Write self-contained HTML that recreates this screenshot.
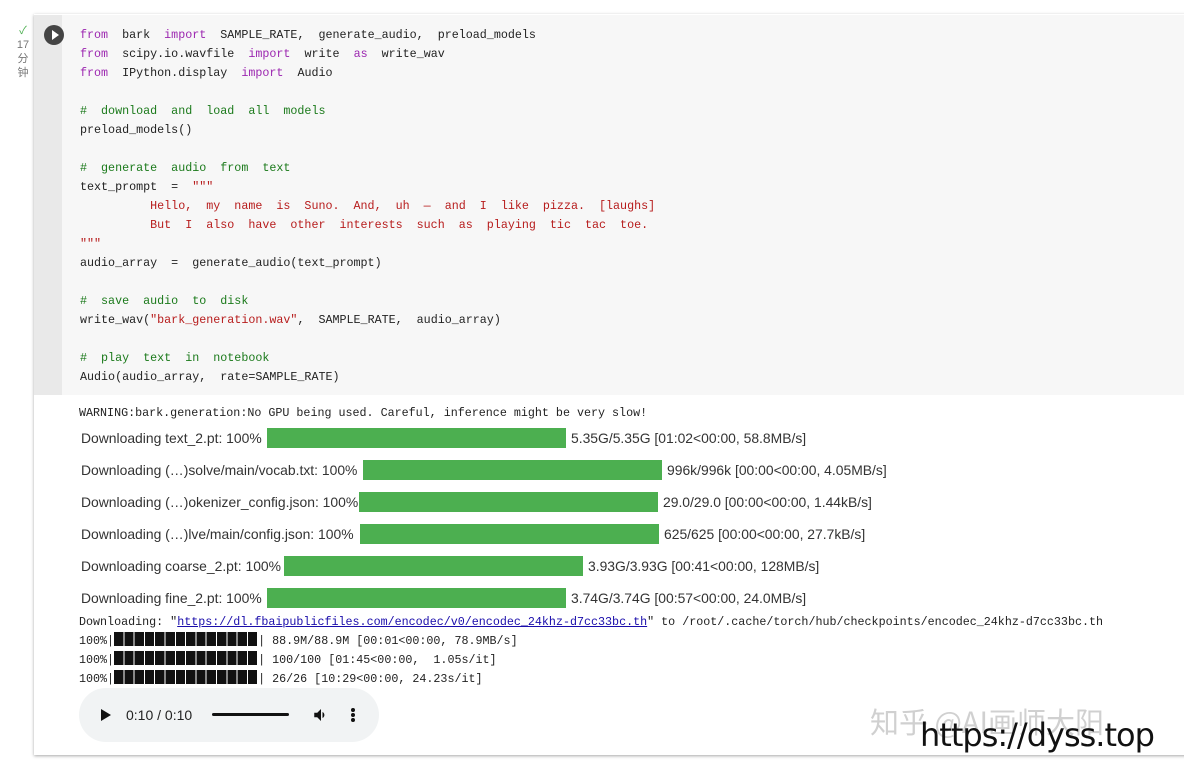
<!DOCTYPE html>
<html><head><meta charset="utf-8"><style>
body{margin:0;width:1184px;height:769px;background:#fff;position:relative;overflow:hidden;font-family:"Liberation Sans",sans-serif}
.card{position:absolute;left:34px;top:14px;width:1160px;height:741px;background:#fff;box-shadow:0 1px 3px rgba(0,0,0,.35)}
.gut{position:absolute;left:34px;top:15px;width:28px;height:380px;background:#e9e9e9}
.code{position:absolute;left:62px;top:15px;width:1130px;height:380px;background:#f7f7f7}
pre{margin:0;font-family:"Liberation Mono","Noto Sans CJK SC",monospace;font-size:11.7px;line-height:19px;color:#222}
.c{position:absolute;left:80px;top:26px}
.k{color:#9c27b0}.g{color:#1b7a1b}.s{color:#b71c1c}
.t{position:absolute;left:81px;font-size:13.9px;color:#333;white-space:nowrap;line-height:20px}
.b{position:absolute;height:20px;width:299px;background:#4caf50}
.o{position:absolute;left:79px}
.bl{display:inline-block;width:144px;height:14px;vertical-align:-2px;background:repeating-linear-gradient(90deg,#111 0 9.3px,#fff 9.3px 10.3px)}
</style></head><body>
<div class="card"></div><div class="gut"></div><div class="code"></div>
<div style="position:absolute;left:44px;top:25px;width:20px;height:20px;border-radius:50%;background:#444"></div>
<div style="position:absolute;left:52px;top:30px;width:0;height:0;border-left:7px solid #fff;border-top:5px solid transparent;border-bottom:5px solid transparent"></div>
<div style="position:absolute;left:16px;top:24px;font-size:11px;line-height:14px;color:#777;font-family:'Liberation Sans','Noto Sans CJK SC',sans-serif;text-align:center;width:14px"><span style="color:#4caf50">✓</span><br>17<br>分<br>钟</div>
<pre class="c"><span class="k">from</span>  bark  <span class="k">import</span>  SAMPLE_RATE,  generate_audio,  preload_models
<span class="k">from</span>  scipy.io.wavfile  <span class="k">import</span>  write  <span class="k">as</span>  write_wav
<span class="k">from</span>  IPython.display  <span class="k">import</span>  Audio

<span class="g">#  download  and  load  all  models</span>
preload_models()

<span class="g">#  generate  audio  from  text</span>
text_prompt  =  <span class="s">"""</span>
<span class="s">          Hello,  my  name  is  Suno.  And,  uh  —  and  I  like  pizza.  [laughs]</span>
<span class="s">          But  I  also  have  other  interests  such  as  playing  tic  tac  toe.</span>
<span class="s">"""</span>
audio_array  =  generate_audio(text_prompt)

<span class="g">#  save  audio  to  disk</span>
write_wav(<span class="s">"bark_generation.wav"</span>,  SAMPLE_RATE,  audio_array)

<span class="g">#  play  text  in  notebook</span>
Audio(audio_array,  rate=SAMPLE_RATE)</pre>
<pre class="o" style="top:404px">WARNING:bark.generation:No GPU being used. Careful, inference might be very slow!</pre>
<div class="t" style="top:428px">Downloading text_2.pt: 100%</div><div class="b" style="left:267px;top:428px"></div><div class="t" style="left:571px;top:428px">5.35G/5.35G [01:02&lt;00:00, 58.8MB/s]</div>
<div class="t" style="top:460px">Downloading (…)solve/main/vocab.txt: 100%</div><div class="b" style="left:363px;top:460px"></div><div class="t" style="left:667px;top:460px">996k/996k [00:00&lt;00:00, 4.05MB/s]</div>
<div class="t" style="top:492px">Downloading (…)okenizer_config.json: 100%</div><div class="b" style="left:359px;top:492px"></div><div class="t" style="left:663px;top:492px">29.0/29.0 [00:00&lt;00:00, 1.44kB/s]</div>
<div class="t" style="top:524px">Downloading (…)lve/main/config.json: 100%</div><div class="b" style="left:360px;top:524px"></div><div class="t" style="left:664px;top:524px">625/625 [00:00&lt;00:00, 27.7kB/s]</div>
<div class="t" style="top:556px">Downloading coarse_2.pt: 100%</div><div class="b" style="left:284px;top:556px"></div><div class="t" style="left:588px;top:556px">3.93G/3.93G [00:41&lt;00:00, 128MB/s]</div>
<div class="t" style="top:588px">Downloading fine_2.pt: 100%</div><div class="b" style="left:267px;top:588px"></div><div class="t" style="left:571px;top:588px">3.74G/3.74G [00:57&lt;00:00, 24.0MB/s]</div>
<pre class="o" style="top:613px">Downloading: "<span style="color:#1a0dab;text-decoration:underline">https://dl.fbaipublicfiles.com/encodec/v0/encodec_24khz-d7cc33bc.th</span>" to /root/.cache/torch/hub/checkpoints/encodec_24khz-d7cc33bc.th
100%|<span class="bl"></span>| 88.9M/88.9M [00:01&lt;00:00, 78.9MB/s]
100%|<span class="bl"></span>| 100/100 [01:45&lt;00:00,  1.05s/it]
100%|<span class="bl"></span>| 26/26 [10:29&lt;00:00, 24.23s/it]</pre>
<div style="position:absolute;left:79px;top:688px;width:300px;height:54px;border-radius:27px;background:#f1f3f4"></div>
<div style="position:absolute;left:101px;top:709px;border-left:10px solid #111;border-top:6px solid transparent;border-bottom:6px solid transparent"></div>
<div class="t" style="left:126px;top:705px;font-size:14px;color:#222">0:10 / 0:10</div>
<div style="position:absolute;left:212px;top:713px;width:77px;height:3px;background:#111;border-radius:2px"></div>
<svg style="position:absolute;left:312px;top:706px" width="18" height="18" viewBox="0 0 24 24"><path d="M3 9v6h4l5 5V4L7 9H3zm13.5 3A4.5 4.5 0 0 0 14 8v8a4.5 4.5 0 0 0 2.5-4z" fill="#111"/></svg>
<div style="position:absolute;left:351px;top:708px;width:4px;height:4px;border-radius:50%;background:#111;box-shadow:0 5px 0 #111,0 10px 0 #111"></div>
<div style="position:absolute;left:870px;top:700px;font-size:29px;color:rgba(150,150,150,.45);font-family:'Noto Sans CJK SC',sans-serif;white-space:nowrap">知乎 @AI画师大阳</div>
<div style="position:absolute;left:920px;top:716px;font-size:32px;color:#111;white-space:nowrap;font-family:'DejaVu Sans',sans-serif;letter-spacing:-1px">https://dyss.top</div>
</body></html>
